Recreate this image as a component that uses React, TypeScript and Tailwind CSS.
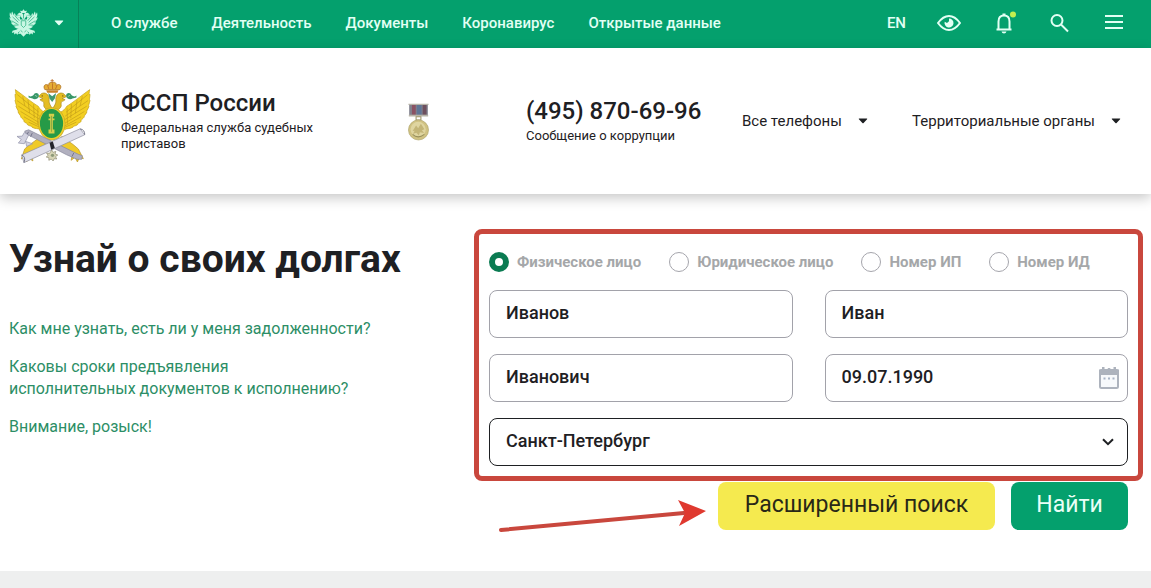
import type { ReactNode } from "react";

const NAV = ["О службе", "Деятельность", "Документы", "Коронавирус", "Открытые данные"];
const PERSON_TYPES = ["Физическое лицо", "Юридическое лицо", "Номер ИП", "Номер ИД"];

function Caret({ className = "" }: { className?: string }) {
  return (
    <svg viewBox="0 0 10 6" className={`h-[6px] w-[10px] shrink-0 fill-current ${className}`} aria-hidden="true">
      <path d="M1.2 0.5h7.6q.8.1.3.8L5.6 5.1q-.6.5-1.2 0L.9 1.3q-.5-.7.3-.8z" />
    </svg>
  );
}

function StateEagle() {
  const half = (
    <>
      <path d="M45 58C34 64 22 61 15 54l6 0C14 52 8 47 6 41l6 1C6 38 2 32 1 25l5 4C2 23 1 17 3 10l5 9C7 14 8 10 10 7l5 12 3-8 4 12 4-8 2 12 4-7 3 14 10 0z" />
      <path d="M45 34c-5-4-4-9-9-10l-11 0 5-6-4-2 6-5 8 1c4 2 5 8 5 14z" />
      <path d="M38 54L24 63l-13 4-2 7 7-2 0 7 6-4 4 5 3-8 14-9z" />
    </>
  );
  return (
    <svg viewBox="0 0 90 86" className="h-[28px] w-[29px]" fill="#c9f7e3" aria-hidden="true">
      {half}
      <g transform="translate(90 0) scale(-1 1)">{half}</g>
      <path d="M38 12l-4-7 7 1 4-6 4 6 7-1-4 7z" />
      <path d="M31 32h28v24q-4 12-14 15-10-3-14-15z" />
      <path d="M38 62h14l10 15-8-1-9 10-9-10-8 1z" />
      <path
        d="M38 36h14v14l-7 7-7-7zM11 24l18 17M18 20l14 16M8 36l19 11M14 50l16-1M79 24L61 41M72 20L58 36M82 36L63 47M76 50l-16-1M45 16v12M33 20l4 3M57 20l-4 3M36 66l6 5M54 66l-6 5"
        fill="none"
        stroke="#37b488"
        strokeWidth="2.5"
      />
    </svg>
  );
}

function ServiceEmblem() {
  const half = (
    <>
      <path
        d="M48 72C50 84 51 89 47 86C48 99 50 104 47 104C49 116 53 120 50 122C53 133 60 137 56 139C61 149 66 151 64 154C69 162 77 163 73 167C79 174 86 173 84 177C91 183 99 181 98 185C107 191 117 188 122 192L135 182L136 140C128 136 122 131 117 122C100 112 77 93 48 72z"
        fill="#f3cf22"
        stroke="#c19d17"
        strokeWidth="2"
      />
      <path
        d="M54 87L119 140M53 105L122 152M57 122L124 163M64 138L124 174M74 154L126 183M88 170L128 188M70 92L77 121M86 103L91 143M103 116L105 158M116 128L115 175"
        fill="none"
        stroke="#c39c19"
        strokeWidth="2"
      />
      <path d="M150 139C145 132 131 128 134 116C136 106 126 108 122 102L131 99 118 93 127 84C138 78 151 87 150 102C148 113 154 119 158 127z" fill="#e4bd22" stroke="#a9871b" strokeWidth="2" />
      <path d="M88 90C96 97 103 89 106 84C111 79 120 84 119 91C117 101 105 103 100 99L88 96z" fill="#389768" />
      <path d="M107 89l7 4" stroke="#91c9ac" strokeWidth="3" />
      <circle cx="129" cy="91" r="2" fill="#694b14" />
    </>
  );
  return (
    <svg viewBox="44 38 232 260" className="h-[87px] w-[77px] shrink-0" role="img" aria-label="Эмблема ФССП России">
      {half}
      <g transform="translate(320 0) scale(-1 1)">{half}</g>
      <path d="M137 72C130 61 138 52 149 59C147 52 153 49 160 50C168 49 173 52 170 59C182 52 190 61 182 72z" fill="#e5ac35" stroke="#a76719" strokeWidth="2" />
      <path d="M159 40v12M154 45h10M145 59l4 11M160 53v17M174 59l-5 11" fill="none" stroke="#bd6d24" strokeWidth="2.5" />
      <path d="M141 74h37l-3 7h-31z" fill="#c98129" />
      <path d="M147 82l12 10 12-10-4 17-8 10-8-10z" fill="#3f9871" />
      <path d="M126 213L91 238 76 251 66 281 76 275 82 290 88 278 101 287 98 271 140 235z" fill="#efca29" stroke="#b3912a" strokeWidth="2" />
      <path d="M188 213L223 238 238 251 253 280 241 277 235 290 228 276 216 285 219 270 176 235z" fill="#efca29" stroke="#b3912a" strokeWidth="2" />
      <ellipse cx="158" cy="175" rx="40" ry="49" fill="#efcf2b" stroke="#c39f22" strokeWidth="2" />
      <ellipse cx="157" cy="174" rx="35" ry="44" fill="#269a47" />
      <path d="M149 145h16v9h-4v5h5v5h-5v28h5v12h-18v-12h5v-28h-5v-5h5v-5h-4z" fill="#d6cf4a" />
      <path d="M157 151v48" stroke="#71983e" strokeWidth="2" />
      <path d="M76 197l12-4 150 74 12 4-2 11-14 0-32-14-120-62z" fill="#b1b0bf" stroke="#85859a" strokeWidth="2" />
      <path d="M88 199l-6 10M99 203l-5 11M224 263l-5 10" fill="none" stroke="#74758c" strokeWidth="3" />
      <path d="M88 209l-13 26-18-2 9-11-13-9 16-1 6-11zM79 228l21 7-18 8z" fill="#d4d4e2" stroke="#8d8ea5" strokeWidth="2" />
      <path d="M67 269L243 190l14 18L74 292z" fill="#dfdfea" stroke="#888999" strokeWidth="2" />
      <path d="M67 269q14 5 7 23M243 190q15 3 14 18" fill="none" stroke="#777989" strokeWidth="3" />
      <path d="M151 232l10-4 6 20-11 5z" fill="#24242b" />
      <path d="M158 254l4 7 8-3-2 8 8 3-7 5 4 7-8-1-3 7-6-6-7 4v-8l-8-2 6-5-5-7 9 1z" fill="#d7d5b6" stroke="#8e8c73" strokeWidth="2" />
      <circle cx="160" cy="270" r="5" fill="#8e9a79" />
    </svg>
  );
}

function Medal() {
  return (
    <svg viewBox="0 0 60 110" className="h-[38px] w-[21px]" role="img" aria-label="Медаль">
      <path d="M3 4h54v32H3z" fill="#80808d" />
      <path d="M11 5h11v29H11z" fill="#8b5263" />
      <path d="M25 5h14v29H25z" fill="#5e7596" />
      <path d="M42 5h11v29H42z" fill="#6e505e" />
      <path d="M1 2h58v4H1zM2 34h56v5H2z" fill="#b8b4a8" />
      <path d="M23 40h14v9H23z" fill="none" stroke="#9c9266" strokeWidth="3" />
      <circle cx="30" cy="78" r="29" fill="#d0c282" stroke="#b0a66d" strokeWidth="2" />
      <circle cx="29" cy="76" r="22" fill="#dfd5a0" />
      <path d="M13 81l10-16 6 8 8-13 10 16-7 3 6 8-12-2-3 9-7-8-10 3 5-9z" fill="#c3b577" />
      <path d="M13 91q15 14 34 0" fill="none" stroke="#978f5b" strokeWidth="3" />
    </svg>
  );
}

function IconButton({ label, children }: { label: string; children: ReactNode }) {
  return (
    <button type="button" aria-label={label} className="relative flex size-6 items-center justify-center">
      {children}
    </button>
  );
}

function TopBar() {
  return (
    <header className="flex h-12 items-center bg-[#04a06d] text-[#e2fff4]">
      <button type="button" aria-label="Государственные органы" className="flex h-full w-[79px] items-center gap-4 border-r border-[#078158] pb-[2px] pl-[9px]">
        <StateEagle />
        <Caret />
      </button>
      <nav className="flex gap-[34px] pb-[2px] pl-8 text-[15px] leading-5 font-medium">
        {NAV.map((item) => (
          <a key={item} href="#" className="whitespace-nowrap">{item}</a>
        ))}
      </nav>
      <div className="ml-auto flex items-center gap-[31px] pr-[25px] pb-[2px]">
        <a href="#" className="text-[15px] leading-5 font-medium">EN</a>
        <IconButton label="Версия для слабовидящих">
          <svg viewBox="0 0 24 18" className="h-[18px] w-6" fill="none" aria-hidden="true">
            <path d="M1 9C5 3.500 8 2 12 2s7 1.500 11 7c-4 5.500-7 7-11 7S5 14.500 1 9z" stroke="currentColor" strokeWidth="2" />
            <path d="M12 4.500a4.500 4.500 0 1 1-4.300 3.200L10 9l2-1.800z" fill="currentColor" />
          </svg>
        </IconButton>
        <IconButton label="Уведомления">
          <svg viewBox="0 0 24 24" className="size-6" fill="none" aria-hidden="true">
            <path d="M4.500 18.500h15M6.500 18v-7.500c0-3.500 2-6 5.500-6s5.500 2.500 5.500 6V18" stroke="currentColor" strokeWidth="2" />
            <path d="M10.500 2.500h3V5h-3zM9.500 20.500h5q-.5 2-2.500 2t-2.500-2z" fill="currentColor" />
            <circle cx="21" cy="3.500" r="3" fill="#c3ef4f" />
          </svg>
        </IconButton>
        <IconButton label="Поиск">
          <svg viewBox="0 0 24 24" className="size-6" fill="none" stroke="currentColor" strokeWidth="2" aria-hidden="true">
            <circle cx="10" cy="9.500" r="5.500" />
            <path d="M14 13.500l7 7" />
          </svg>
        </IconButton>
        <IconButton label="Меню">
          <svg viewBox="0 0 24 24" className="size-6" stroke="currentColor" strokeWidth="2" aria-hidden="true">
            <path d="M3 5h18M3 11h18M3 17h18" />
          </svg>
        </IconButton>
      </div>
    </header>
  );
}

function ServiceHeader() {
  return (
    <section className="relative flex items-center bg-white pt-[30px] pr-[30px] pb-[29px] pl-[14px] shadow-[0_4px_12px_rgba(0,0,0,0.22)]">
      <ServiceEmblem />
      <div className="ml-[30px] w-[287px] pb-[2px]">
        <p className="text-2xl leading-7 font-medium">ФССП России</p>
        <p className="mt-[3px] w-[210px] text-[13px] leading-4">Федеральная служба судебных приставов</p>
      </div>
      <Medal />
      <div className="ml-[97px] w-[216px] pb-[2px]">
        <a href="tel:+74958706996" className="block text-2xl leading-7 font-medium whitespace-nowrap">(495) 870-69-96</a>
        <p className="mt-[3px] text-[13px] leading-4">Сообщение о коррупции</p>
      </div>
      <button type="button" className="flex items-center gap-4 pb-[2px] text-[15px] leading-5 whitespace-nowrap">
        Все телефоны <Caret />
      </button>
      <button type="button" className="ml-auto flex items-center gap-4 pb-[2px] text-[15px] leading-5 whitespace-nowrap">
        Территориальные органы <Caret />
      </button>
    </section>
  );
}

function Field({ label, value }: { label: string; value: string }) {
  return (
    <input
      type="text"
      aria-label={label}
      defaultValue={value}
      className="h-12 w-full min-w-0 rounded-lg border border-[#a2a2aa] bg-white px-4 pb-1 text-lg font-medium"
    />
  );
}

function PointerArrow() {
  return (
    <svg viewBox="0 0 210 40" className="h-10 w-[210px] shrink-0" aria-hidden="true">
      <path d="M3 31L186 14" stroke="#c9473d" strokeWidth="4" strokeLinecap="round" />
      <path d="M180 1l28 11-27 15 6-13z" fill="#df392f" />
    </svg>
  );
}

function DebtSearch() {
  return (
    <form className="w-[669px] shrink-0" onSubmit={(event) => event.preventDefault()}>
      <div className="rounded-lg border-5 border-[#c9473d] px-[10px] pt-[18px] pb-[10px]">
        <div role="radiogroup" aria-label="Тип поиска" className="flex gap-7">
          {PERSON_TYPES.map((type, index) => (
            <label key={type} className="flex items-center gap-2 text-[15px] leading-5 font-bold whitespace-nowrap text-[#a5a7a9]">
              <input
                type="radio"
                name="person-type"
                defaultChecked={index === 0}
                className="size-5 shrink-0 appearance-none rounded-full border border-[#a5a5ac] bg-white checked:border-6 checked:border-[#0b7b52]"
              />
              {type}
            </label>
          ))}
        </div>
        <div className="mt-[18px] grid grid-cols-2 gap-x-8 gap-y-4">
          <Field label="Фамилия" value="Иванов" />
          <Field label="Имя" value="Иван" />
          <Field label="Отчество" value="Иванович" />
          <div className="relative">
            <Field label="Дата рождения" value="09.07.1990" />
            <button type="button" aria-label="Открыть календарь" className="absolute top-3 right-2">
              <svg viewBox="0 0 22 24" className="h-6 w-[22px]" aria-hidden="true">
                <rect x="2" y="4" width="18" height="18" rx="1.500" fill="#f7f9fb" stroke="#adb3bd" strokeWidth="2" />
                <path d="M1 3.500h20V9H1zM4 1h2.500v4H4zM9.800 2h2.500v3H9.800zM15.500 1H18v4h-2.500z" fill="#adb3bd" />
                <path d="M5.500 11.500h2v2h-2zM10 11.500h2v2h-2zM14.500 11.500h2v2h-2z" fill="#a8b4c5" />
              </svg>
            </button>
          </div>
          <div className="relative col-span-2">
            <select aria-label="Регион" className="h-12 w-full appearance-none rounded-lg border border-[#1e2023] bg-white px-4 pb-[2px] text-lg font-medium">
              <option>Санкт-Петербург</option>
            </select>
            <svg viewBox="0 0 12 8" className="pointer-events-none absolute top-5 right-[14px] h-2 w-3" fill="none" stroke="#1e2023" strokeWidth="2" aria-hidden="true">
              <path d="M1 1.200l5 5 5-5" />
            </svg>
          </div>
        </div>
      </div>
      <div className="mt-px flex items-start justify-end pr-[15px]">
        <div className="mr-[10px] pt-[17px]">
          <PointerArrow />
        </div>
        <button type="button" className="h-12 w-[277px] rounded-lg bg-[#f5ea4f] pb-[2px] text-[23px] text-[#292817]">Расширенный поиск</button>
        <button type="submit" className="ml-4 h-12 w-[117px] rounded-lg bg-[#04a06d] pb-[2px] text-[23px] text-[#eafff7]">Найти</button>
      </div>
    </form>
  );
}

export default function App() {
  return (
    <div className="flex min-h-screen flex-col bg-white font-['Roboto','Noto_Sans',sans-serif] text-[#1e2023]">
      <TopBar />
      <ServiceHeader />
      <main className="flex justify-between gap-8 pt-[35px] pr-2 pb-8 pl-[9px]">
        <section>
          <h1 className="pt-1 text-[39px] leading-[52px] font-bold whitespace-nowrap">Узнай о своих долгах</h1>
          <div className="mt-[33px] flex flex-col gap-4 text-base leading-[22px] text-[#2c8e66]">
            <a href="#">Как мне узнать, есть ли у меня задолженности?</a>
            <a href="#">Каковы сроки предъявления<br />исполнительных документов к исполнению?</a>
            <a href="#">Внимание, розыск!</a>
          </div>
        </section>
        <DebtSearch />
      </main>
      <footer className="min-h-[18px] grow bg-[#eeefef]" />
    </div>
  );
}
